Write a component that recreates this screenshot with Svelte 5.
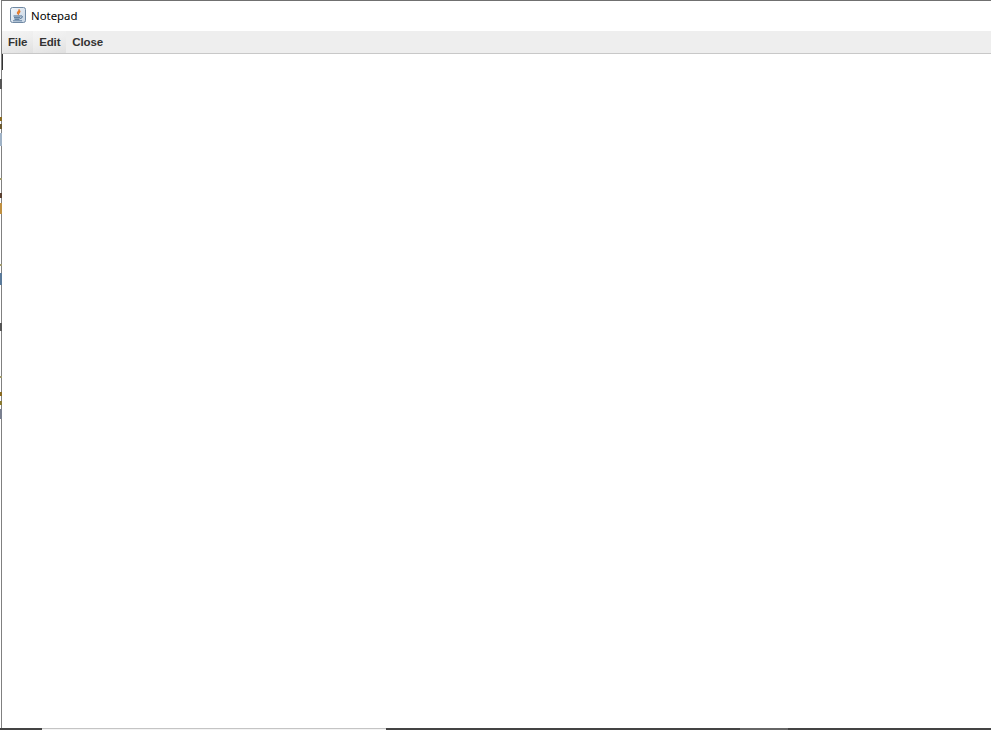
<script>
  const menus = ['File', 'Edit', 'Close'];

  // bits of the desktop showing through along the left window edge
  const specks = [
    { top: 78, height: 10, color: '#555' },
    { top: 116, height: 4, color: '#8a6a20' },
    { top: 123, height: 5, color: '#6b5a30' },
    { top: 132, height: 13, color: '#9fb2c6' },
    { top: 177, height: 2, color: '#a09a70' },
    { top: 192, height: 5, color: '#5a4030' },
    { top: 202, height: 11, color: '#c09040' },
    { top: 263, height: 2, color: '#a09a70' },
    { top: 272, height: 12, color: '#5a7a9a' },
    { top: 322, height: 8, color: '#555' },
    { top: 375, height: 2, color: '#a09a70' },
    { top: 391, height: 4, color: '#8a6a20' },
    { top: 400, height: 4, color: '#8a7a30' },
    { top: 408, height: 10, color: '#7a8090' }
  ];
</script>

<div class="window">
  <header class="titlebar">
    <svg class="icon" width="16" height="16" viewBox="0 0 16 16" aria-hidden="true">
      <defs>
        <linearGradient id="tile" x1="0" y1="0" x2="1" y2="1">
          <stop offset="0" stop-color="#f4f7fa" />
          <stop offset="1" stop-color="#c6d4e3" />
        </linearGradient>
      </defs>
      <rect x="0.5" y="0.5" width="15" height="15" rx="2" fill="url(#tile)" stroke="#6f88a3" />
      <path d="M9 2c1 1.600-2.300 2.600-1.600 4.400.2.600.6 1 1 1.300 0-1.300 2.200-2.200 1.600-4" fill="#f08a24" stroke="#d9601a" stroke-width="0.800" />
      <path d="M3.500 9h7M4 10.700h6M4.500 12.300h5" stroke="#3f648a" stroke-width="1.100" fill="none" />
      <path d="M10.500 9c2.600-.6 2.600 2-.4 2.400" stroke="#3f648a" stroke-width="1" fill="none" />
      <path d="M3 13.800h9" stroke="#5d7d9e" stroke-width="1" />
    </svg>
    <span class="title">Notepad</span>
  </header>

  <nav class="menubar">
    {#each menus as menu}
      <span class="menu" class:plain={menu === 'Close'}>{menu}</span>
    {/each}
  </nav>

  <main class="editor">
    <span class="caret"></span>
  </main>

  <footer class="taskstrip">
    <span class="seg first"></span>
    <span class="seg light"></span>
    <span class="seg dark"></span>
    <span class="seg mid"></span>
    <span class="seg rest"></span>
  </footer>

  {#each specks as s}
    <span class="speck" style="top:{s.top}px;height:{s.height}px;background:{s.color}"></span>
  {/each}
</div>

<style>
  :global(body) {
    margin: 0;
    background: #fff;
    overflow: hidden;
  }
  .window {
    position: relative;
    width: 990px;
    height: 730px;
    margin-left: 1px;
    box-sizing: border-box;
    display: flex;
    flex-direction: column;
    background: #fff;
    border-top: 1px solid #707070;
    border-left: 1px solid #808080;
    font-family: 'Liberation Sans', Arial, sans-serif;
  }
  .titlebar {
    height: 30px;
    box-sizing: border-box;
    display: flex;
    align-items: center;
    gap: 5px;
    padding: 0 0 2px 8px;
    background: #fff;
  }
  .icon {
    flex: none;
  }
  .title {
    font-family: 'Noto Sans', 'Open Sans', sans-serif;
    font-size: 11.4px;
    color: #000;
  }
  .menubar {
    height: 22px;
    display: flex;
    background: #eee;
    border-bottom: 1px solid #c8c8c8;
  }
  .menu {
    display: flex;
    align-items: center;
    padding: 0 6px;
    font-size: 11.5px;
    font-weight: 700;
    letter-spacing: -0.15px;
    color: #333;
    background: linear-gradient(165deg, #f4f4f4 0%, #eee 45%, #e0e0e0 100%);
  }
  .menu.plain {
    background: none;
  }
  .editor {
    flex: 1;
    position: relative;
    background: #fff;
  }
  .caret {
    position: absolute;
    left: 0;
    top: 0;
    width: 1px;
    height: 16px;
    background: #333;
  }
  .taskstrip {
    height: 2px;
    display: flex;
    margin-left: -2px;
  }
  .seg {
    background: #444;
  }
  .seg.first {
    width: 42px;
  }
  .seg.light {
    width: 344px;
    background: linear-gradient(#c4c4c4 50%, #f4f4f4 50%);
  }
  .seg.dark {
    width: 354px;
  }
  .seg.mid {
    width: 48px;
    background: #666;
  }
  .seg.rest {
    flex: 1;
  }
  .speck {
    position: absolute;
    left: -2px;
    width: 2px;
  }
</style>
